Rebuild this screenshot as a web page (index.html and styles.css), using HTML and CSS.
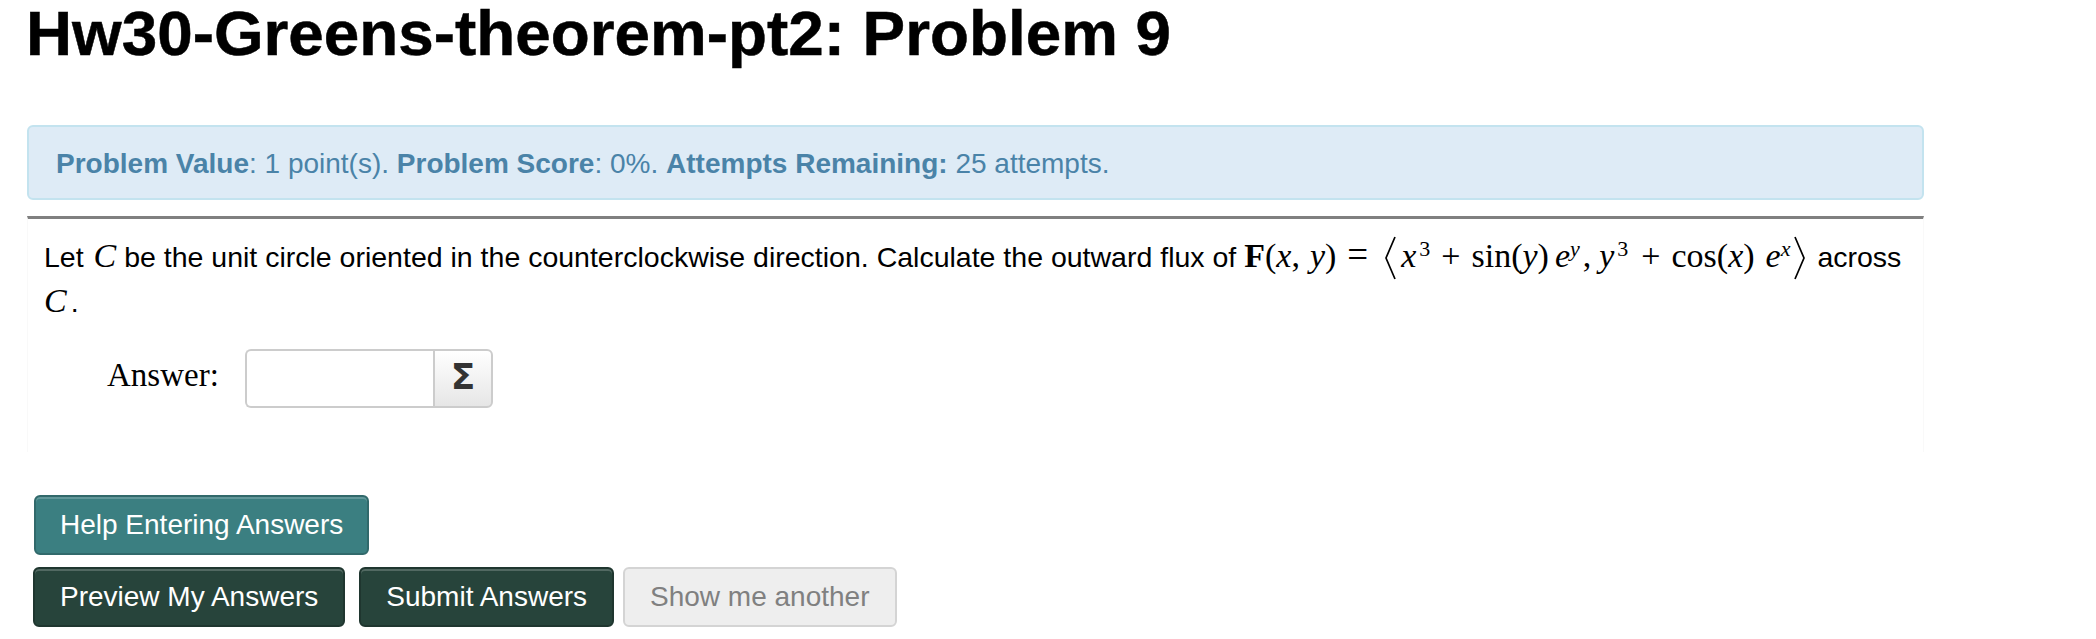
FILE: index.html
```html
<!DOCTYPE html>
<html lang="en">
<head>
<meta charset="utf-8">
<title>Hw30-Greens-theorem-pt2: Problem 9</title>
<link rel="stylesheet" href="styles.css">
</head>
<body>
<main class="page">
  <h1 class="title">Hw30-Greens-theorem-pt2: Problem 9</h1>
  <div class="alert"><b>Problem Value</b>: 1 point(s). <b>Problem Score</b>: 0%. <b>Attempts Remaining:</b> 25 attempts.</div>
  <section class="problem">
    <p class="statement">Let <span class="math c-first"><i>C</i></span> be the unit circle oriented in the counterclockwise direction. Calculate the outward flux of <span class="math"><b>F</b>(<i>x</i>,<i class="m10">y</i>)<span class="m11 eq">=</span><svg class="angle m16" viewBox="0 0 12 44" aria-hidden="true"><path d="M11 1 2 22l9 21"/></svg><i class="m5">x</i><sup class="m3">3</sup><span class="m11">+</span><span class="m11">sin</span>(<i>y</i>)<i class="m6">e</i><sup><i>y</i></sup><span class="m3">,</span><i class="m8">y</i><sup class="m3">3</sup><span class="m13">+</span><span class="m11">cos</span>(<i>x</i>)<i class="m11">e</i><sup><i>x</i></sup><svg class="angle m4" viewBox="0 0 12 44" aria-hidden="true"><path d="M1 1l9 21-9 21"/></svg></span> <span class="after-math">across</span> <span class="math c-last"><i>C</i></span>.</p>
    <div class="answer">
      <label class="answer-label" for="ans">Answer:</label>
      <div class="input-group">
        <input class="answer-input" id="ans" type="text">
        <span class="sigma">Σ</span>
      </div>
    </div>
  </section>
  <div class="actions">
    <div class="row"><button class="btn btn-help">Help Entering Answers</button></div>
    <div class="row">
      <button class="btn btn-dark">Preview My Answers</button>
      <button class="btn btn-dark btn-submit">Submit Answers</button>
      <button class="btn btn-off">Show me another</button>
    </div>
  </div>
</main>
</body>
</html>
```
FILE: styles.css
```css
* { box-sizing: border-box; }
html, body { margin: 0; background: #fff; }
body { font-family: "Liberation Sans", Arial, sans-serif; color: #000; }
.page { width: 1924px; height: 639px; padding-left: 27px; overflow: hidden; }
.title { margin: 0 0 0 -1px; font-size: 63.8px; line-height: 66px; font-weight: 700; -webkit-text-stroke: 0.5px #000; }
.alert {
  margin-top: 59px; height: 75px; padding: 22px 27px 0;
  background: #deebf6; border: 2px solid #c3e3ef; border-radius: 6px;
  color: #4a83a8; font-size: 28px; line-height: 30px;
}
.problem {
  margin-top: 16px; height: 236px; padding: 16px 6px 0 16px;
  border-top: 3px solid #808080; border-right: 1px solid #f9f9f9; border-left: 1px solid #f9f9f9;
  background: #fff;
}
.statement { margin: 0; font-size: 28.5px; line-height: 44px; }
.math { font-family: "Liberation Serif", "Times New Roman", serif; font-size: 34px; line-height: 0; white-space: nowrap; }
.math sup { font-size: 22px; line-height: 0; vertical-align: 11px; }
.c-first { margin-left: 2px; }
.c-last { margin-right: 4px; }
.after-math { margin-left: 3px; }
.m3 { margin-left: 3px; }
.m4 { margin-left: 4px; }
.m5 { margin-left: 5px; }
.m6 { margin-left: 6px; }
.m8 { margin-left: 8px; }
.m10 { margin-left: 10px; }
.m11 { margin-left: 11px; }
.m13 { margin-left: 13px; }
.m16 { margin-left: 16px; }
.eq { font-size: 37px; line-height: 0; }
.angle { width: 12px; height: 44px; vertical-align: -13px; fill: none; stroke: #000; stroke-width: 1.7; }
.answer { display: flex; align-items: center; margin-top: 25px; padding-left: 63px; }
.answer-label { width: 138px; padding-bottom: 6px; font-family: "Liberation Serif", serif; font-size: 33px; }
.input-group { display: flex; width: 248px; height: 59px; }
.answer-input { width: 188px; height: 59px; border: 2px solid #ccc; border-right: 0; border-radius: 6px 0 0 6px; background: #fff; }
.sigma {
  flex: 1; display: flex; align-items: center; justify-content: center;
  border: 2px solid #ccc; border-radius: 0 6px 6px 0; padding-bottom: 4px;
  background: linear-gradient(#fff, #e6e6e6);
  font: 700 36px "DejaVu Sans", sans-serif; color: #333;
}
.actions { padding-left: 6px; margin-top: 43px; }
.row { display: flex; margin-bottom: 12px; }
.btn {
  height: 60px; padding: 0 25px; border-radius: 6px; font: 400 28px/1 "Liberation Sans", sans-serif;
  color: #fff; border: 2px solid transparent;
}
.btn-help { padding: 0 24px; background: #3b7f81; border-color: #31696b; box-shadow: inset 0 2px 0 rgba(255,255,255,.2); margin-left: 1px; }
.btn-dark { background: #27443b; border-color: #1f362f; box-shadow: inset 0 2px 0 rgba(255,255,255,.2); }
.btn-submit { margin-left: 14px; }
.btn-off { margin-left: 9px; background: #eee; border-color: #d4d4d4; color: #808080; }
```
